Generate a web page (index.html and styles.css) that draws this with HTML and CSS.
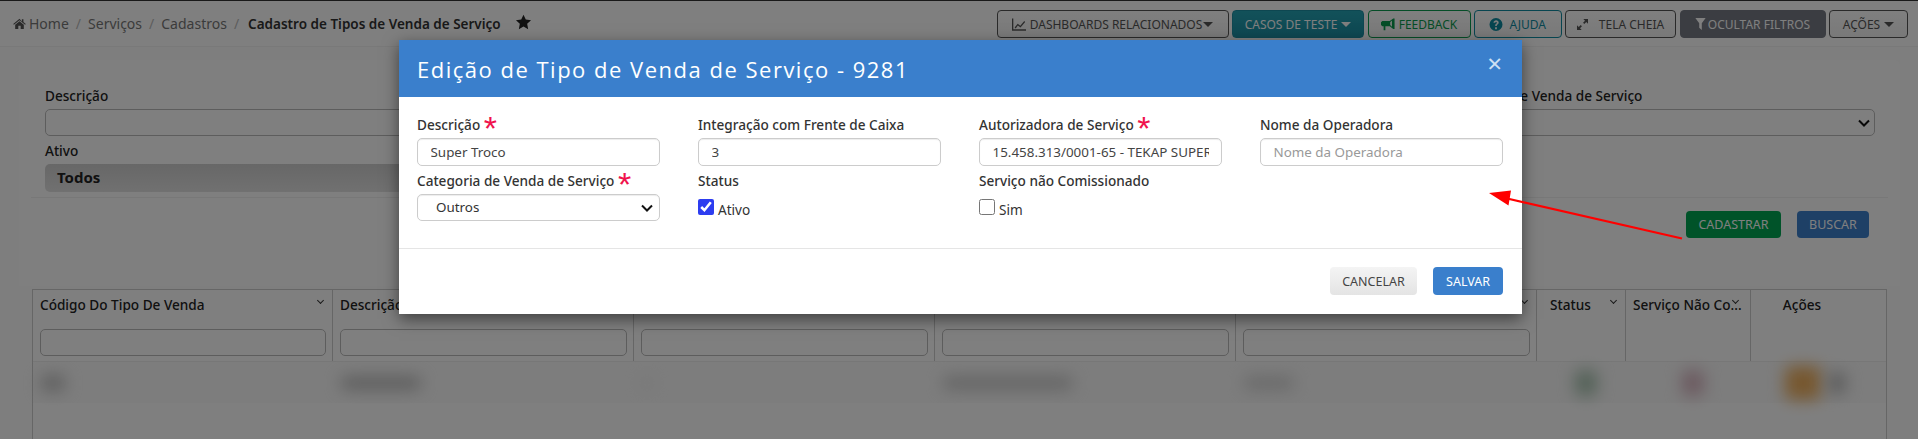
FILE: index.html
```html
<!DOCTYPE html>
<html lang="pt-BR">
<head>
<meta charset="utf-8">
<title>Cadastro de Tipos de Venda de Serviço</title>
<link rel="stylesheet" href="styles.css">
</head>
<body>
<div class="page">
  <header class="topbar">
    <nav class="crumbs">
      <svg class="ico-home" viewBox="0 0 16 14"><path d="M8 1 0 7.600l.9 1L8 2.800l7.100 5.800.9-1-3-2.500V1.500h-2v2.900zM2.500 8.700V14H6.500V10h3v4h4V8.700L8 4.200z"/></svg>
      <span class="crumb">Home</span><span class="sep">/</span>
      <span class="crumb">Serviços</span><span class="sep">/</span>
      <span class="crumb">Cadastros</span><span class="sep">/</span>
      <strong class="crumb-current">Cadastro de Tipos de Venda de Serviço</strong>
      <svg class="ico-star" viewBox="0 0 24 24"><path d="M12 1l3.400 7.300 7.900 1-5.800 5.500 1.500 7.900L12 18.800l-7 3.900 1.500-7.900L.7 9.300l7.900-1z"/></svg>
    </nav>
    <div class="actions">
      <button class="tb tb-dash"><svg class="ico" viewBox="0 0 16 14"><path d="M0 0h1.500v12.500H16V14H0z"/><path d="M3 10.500l3.500-4.500 3 2.500L14 3l1 1-5.300 6.500-3-2.500-2.500 3.500z"/></svg>DASHBOARDS RELACIONADOS<i class="caret"></i></button>
      <button class="tb tb-casos">CASOS DE TESTE <i class="caret caret-gap"></i></button>
      <button class="tb tb-feed"><svg class="ico" viewBox="0 0 16 14"><path d="M14 0h1.500v12H14l-4-3H5v4.500H3V9H1.500L0 7.500v-3L1.500 3H10zM12.500 2.500 10.500 4.300v3.400l2 1.800z"/></svg>FEEDBACK</button>
      <button class="tb tb-ajuda"><svg class="ico" viewBox="0 0 14 14"><path fill-rule="evenodd" d="M7 0a7 7 0 1 0 0 14A7 7 0 0 0 7 0zM6 10h2v2H6zM4.300 5C4.500 3.500 5.600 2.500 7.100 2.500c1.600 0 2.800 1 2.800 2.400 0 1.100-.6 1.700-1.300 2.200-.5.300-.7.600-.7 1.400H6.100c0-1.300.4-1.900 1.100-2.400.5-.4.800-.6.800-1.100 0-.5-.4-.8-.9-.8-.6 0-1 .4-1.100 1z"/></svg>AJUDA</button>
      <button class="tb tb-tela"><svg class="ico ico-exp" viewBox="0 0 14 14"><path d="M8 0h6v6l-2.200-2.200-2.500 2.500-1.600-1.600 2.500-2.500zM6 14H0V8l2.200 2.200 2.500-2.500 1.600 1.600-2.500 2.500z"/></svg>TELA CHEIA</button>
      <button class="tb tb-ocultar"><svg class="ico ico-fil" viewBox="0 0 12 14"><path d="M0 0h12L7.500 6v8l-3-2.500V6z"/></svg>OCULTAR FILTROS</button>
      <button class="tb tb-acoes">AÇÕES <i class="caret caret-gap"></i></button>
    </div>
  </header>

  <section class="panel">
    <div class="filters">
      <div class="f-col">
        <label class="f-label">Descrição</label>
        <div class="f-input"></div>
        <label class="f-label f-second">Ativo</label>
        <div class="f-select">Todos</div>
      </div>
      <div class="f-col f-right">
        <label class="f-label">Categoria de Venda de Serviço</label>
        <div class="f-input f-chev"><svg viewBox="0 0 12 8"><path d="M1 1.500 6 6.500l5-5" fill="none" stroke="#111" stroke-width="2"/></svg></div>
      </div>
    </div>
    <div class="panel-rule"></div>
    <div class="panel-btns">
      <button class="pb pb-green">CADASTRAR</button>
      <button class="pb pb-blue">BUSCAR</button>
    </div>
  </section>

  <section class="grid">
    <div class="gh">
      <div class="gc c1"><span class="gt">Código Do Tipo De Venda</span><i class="chev"></i><div class="gi"></div></div>
      <div class="gc c2"><span class="gt">Descrição</span><i class="chev"></i><div class="gi"></div></div>
      <div class="gc c2"><span class="gt">Integração</span><i class="chev"></i><div class="gi"></div></div>
      <div class="gc c2"><span class="gt">Autorizadora</span><i class="chev"></i><div class="gi"></div></div>
      <div class="gc c2"><span class="gt">Nome</span><i class="chev"></i><div class="gi"></div></div>
      <div class="gc c3"><span class="gt gt-status">Status</span><i class="chev"></i></div>
      <div class="gc c4"><span class="gt">Serviço Não Co...</span><i class="chev chev-tight"></i></div>
      <div class="gc c5"><span class="gt gt-center">Ações</span></div>
    </div>
    <div class="grow">
      <div class="cell c1"><i class="blob b-code"></i></div>
      <div class="cell c2"><i class="blob b-desc"></i></div>
      <div class="cell c2"><i class="blob b-int"></i></div>
      <div class="cell c2"><i class="blob b-aut"></i></div>
      <div class="cell c2"><i class="blob b-nom"></i></div>
      <div class="cell c3 cell-center"><i class="blob b-green"></i></div>
      <div class="cell c4 cell-center"><i class="blob b-pink"></i></div>
      <div class="cell c5 cell-acts"><i class="blob b-orange"></i><i class="blob b-grey"></i></div>
    </div>
  </section>
</div>

<div class="overlay"></div>

<div class="modal" role="dialog">
  <div class="m-head">
    <h2 class="m-title">Edição de Tipo de Venda de Serviço - 9281</h2>
    <span class="m-close">×</span>
  </div>
  <div class="m-body">
    <div class="m-field"><label class="m-label">Descrição <b class="req">*</b></label><input class="m-input" value="Super Troco"></div>
    <div class="m-field"><label class="m-label">Integração com Frente de Caixa</label><input class="m-input" value="3"></div>
    <div class="m-field"><label class="m-label">Autorizadora de Serviço <b class="req">*</b></label><input class="m-input" value="15.458.313/0001-65 - TEKAP SUPERMERCADOS"></div>
    <div class="m-field"><label class="m-label">Nome da Operadora</label><input class="m-input" placeholder="Nome da Operadora"></div>
    <div class="m-field"><label class="m-label">Categoria de Venda de Serviço <b class="req">*</b></label><select class="m-select"><option>Outros</option></select></div>
    <div class="m-field"><label class="m-label">Status</label><label class="m-check"><input type="checkbox" checked><span>Ativo</span></label></div>
    <div class="m-field"><label class="m-label">Serviço não Comissionado</label><label class="m-check"><input type="checkbox"><span>Sim</span></label></div>
  </div>
  <div class="m-foot">
    <button class="mb mb-cancel">CANCELAR</button>
    <button class="mb mb-save">SALVAR</button>
  </div>
</div>

<svg class="arrow" viewBox="0 0 1918 439"><line x1="1682" y1="238.500" x2="1505" y2="198" stroke="#f00" stroke-width="2.200"/><polygon points="1489,193 1511,190.500 1508.500,205.500" fill="#f00"/></svg>
</body>
</html>
```
FILE: styles.css
```css
* { box-sizing: border-box; }
html, body { margin: 0; height: 100%; }
body {
  width: 1918px;
  height: 439px;
  overflow: hidden;
  position: relative;
  background: #fcfcfc;
  font-family: "Noto Sans", "Open Sans", sans-serif;
  font-size: 13.600px;
  color: #333;
}
button { font-family: inherit; cursor: pointer; }

.page { display: flex; flex-direction: column; height: 439px; }

.topbar {
  height: 47px;
  flex: none;
  display: flex;
  justify-content: space-between;
  border-top: 1px solid #333;
  border-bottom: 1px solid #f2f2f2;
  background: #fff;
  padding: 9px 10px 0 13px;
}
.crumbs { display: flex; align-items: center; height: 27px; font-size: 14px; color: #777; }
.ico-home { width: 13px; height: 11px; fill: #555; margin-right: 3px; }
.sep { color: #bbb; margin: 0 7px; }
.crumb-current { font-weight: 600; color: #333; font-size: 13.500px; margin-left: 2px; }
.ico-star { width: 17px; height: 16px; fill: #222; margin-left: 14px; margin-top: -3px; }

.actions { display: flex; gap: 3.500px; }
.tb {
  height: 28px;
  display: flex;
  align-items: center;
  justify-content: center;
  padding: 0;
  font-size: 12px;
  border-radius: 4px;
  border: 1px solid #555;
  background: linear-gradient(#fff, #f2f2f2);
  color: #555;
}
.ico { width: 14px; height: 13px; fill: currentColor; margin-right: 4px; }
.ico-exp { width: 11px; height: 11px; margin-right: 11px; }
.ico-fil { width: 11px; height: 12px; margin-right: 2px; }
.caret {
  display: inline-block;
  width: 0;
  height: 0;
  border-left: 5px solid transparent;
  border-right: 5px solid transparent;
  border-top: 5px solid currentColor;
  margin-left: 1px;
}
.caret-gap { margin-left: 4px; }
.tb-dash { width: 232px; }
.tb-casos { width: 132px; background: linear-gradient(#25a3b4, #1c8ea3); border-color: #1c8ea3; color: #fff; }
.tb-feed { width: 103px; color: #0b9a4e; border-color: #0b9a4e; }
.tb-ajuda { width: 87.500px; color: #0f8aa0; border-color: #0f8aa0; }
.tb-ajuda .ico { margin-right: 6px; }
.tb-tela { width: 111px; }
.tb-ocultar { width: 146px; background: #777b85; border-color: #777b85; color: #fff; }
.tb-acoes { width: 79px; }

.panel {
  flex: none;
  height: 226px;
  margin: 13px 18px 0 19px;
  background: #fff;
  border-radius: 6px 6px 0 0;
  display: flex;
  flex-direction: column;
  padding: 0 12px;
}
.filters { display: flex; justify-content: space-between; padding: 26px 13px 0 14px; height: 137px; }
.f-col { width: 390px; display: flex; flex-direction: column; }
.f-right { width: 430px; }
.f-label { display: block; font-size: 13.600px; line-height: 20px; height: 23px; color: #222; font-weight: 500; }
.f-second { margin-top: 5px; }
.f-input {
  height: 27px;
  border: 1px solid #bbb;
  border-radius: 5px;
  background: #fff;
  display: flex;
  align-items: center;
  justify-content: flex-end;
  padding-right: 4px;
}
.f-chev svg { width: 12px; height: 8px; }
.f-select {
  height: 28px;
  border-radius: 5px;
  background: linear-gradient(#cfcfcf, #e2e2e2);
  font-weight: 700;
  font-size: 15px;
  line-height: 27px;
  padding-left: 12px;
  color: #222;
}
.panel-rule { height: 1px; background: #f0f0f0; }
.panel-btns { display: flex; justify-content: flex-end; gap: 16px; margin-top: 13px; padding-right: 19px; }
.pb { height: 27px; border: 0; border-radius: 4px; color: #fff; font-size: 12.500px; padding: 0; }
.pb-green { width: 95px; background: #00a653; }
.pb-blue { width: 72px; background: #3c80cc; }

.grid {
  flex: 1;
  margin: 3px 31px 0 32px;
  border: 1px solid #ccc;
  border-bottom: 0;
  background: #fff;
  display: flex;
  flex-direction: column;
}
.gh { display: flex; height: 72px; flex: none; border-bottom: 1px solid #eee; }
.grow { display: flex; height: 41px; background: #fafafa; }
.c1 { width: 300px; }
.c2 { width: 301px; }
.c3 { width: 89px; }
.c4 { width: 125px; }
.c5 { flex: 1; }
.gc { position: relative; border-right: 1px solid #ccc; padding: 5px 6px 0 7px; font-size: 13.600px; color: #222; }
.c5.gc { border-right: 0; }
.gt { display: block; height: 34px; line-height: 19px; white-space: nowrap; font-weight: 500; }
.gt-status { padding-left: 6px; }
.gt-center { text-align: center; padding-right: 34px; }
.gi { height: 27px; border: 1px solid #bbb; border-radius: 5px; background: #fff; }
.chev {
  position: absolute;
  top: 8px;
  right: 9px;
  width: 5px;
  height: 5px;
  border-right: 1px solid #333;
  border-bottom: 1px solid #333;
  transform: rotate(45deg);
}
.chev-tight { right: 12px; }

.cell { display: flex; align-items: center; padding-left: 8px; }
.cell-center { justify-content: center; }
.cell-acts { padding-left: 34px; gap: 8px; }
.blob { display: block; filter: blur(8px); border-radius: 6px; }
.b-code { width: 24px; height: 16px; background: #bdbdbd; }
.b-desc { width: 80px; height: 12px; background: #b4b4b4; }
.b-int { width: 10px; height: 10px; background: #ebebeb; }
.b-aut { width: 130px; height: 12px; background: #c4c4c4; }
.b-nom { width: 50px; height: 12px; background: #cfcfcf; }
.b-green { width: 22px; height: 26px; background: #a8c4b0; }
.b-pink { width: 22px; height: 26px; background: #d8b4c0; }
.b-orange { width: 36px; height: 34px; background: #eeb060; }
.b-grey { width: 16px; height: 22px; background: #b4b4b4; }

.overlay { position: absolute; inset: 0; background: rgba(0, 0, 0, .5); }

.modal {
  position: absolute;
  left: 399px;
  top: 40px;
  width: 1123px;
  height: 274px;
  background: #fff;
  box-shadow: 0 5px 15px rgba(0, 0, 0, .5);
  display: flex;
  flex-direction: column;
}
.m-head {
  height: 57px;
  flex: none;
  background: #3a7fcc;
  color: #fff;
  display: flex;
  justify-content: space-between;
  padding: 0 20px 0 18px;
}
.m-title { margin: 0; font-size: 22px; font-weight: 400; line-height: 58px; letter-spacing: 1.500px; font-family: "Open Sans", "Noto Sans", sans-serif; }
.m-close { font-size: 26px; line-height: 46px; color: #cfe0f3; font-weight: 400; }

.m-body {
  height: 152px;
  flex: none;
  border-bottom: 1px solid #e5e5e5;
  display: grid;
  grid-template-columns: repeat(4, 243px);
  column-gap: 38px;
  grid-auto-rows: 56px;
  padding: 17px 0 0 18px;
}
.m-label { display: block; height: 24px; line-height: 22px; font-size: 13.600px; color: #333; white-space: nowrap; font-weight: 500; }
.req { color: #f0134d; font-size: 34px; line-height: 14px; font-weight: 400; vertical-align: -10px; font-family: "Liberation Sans", sans-serif; }
.m-input {
  display: block;
  width: 243px;
  height: 28px;
  border: 1px solid #ccc;
  border-radius: 5px;
  padding: 0 12.500px;
  font: 13.400px "Noto Sans", sans-serif;
  color: #444;
  background: #fff;
  box-shadow: inset 0 1px 1px rgba(0, 0, 0, .075);
}
.m-input::placeholder { color: #999; }
.m-select {
  display: block;
  width: 243px;
  height: 27px;
  border: 1px solid #ccc;
  border-radius: 5px;
  padding: 0 0 2px 18px;
  font: 13.400px "Noto Sans", sans-serif;
  color: #333;
  appearance: none;
  background: #fff url("data:image/svg+xml,%3Csvg xmlns='http://www.w3.org/2000/svg' viewBox='0 0 12 8'%3E%3Cpath d='M1 1.500 6 6.500l5-5' fill='none' stroke='%23111' stroke-width='2'/%3E%3C/svg%3E") no-repeat right 6px center / 12px 8px;
  box-shadow: inset 0 1px 1px rgba(0, 0, 0, .075);
}
.m-check { display: flex; align-items: flex-start; gap: 4px; height: 28px; font-size: 13.600px; color: #333; padding-top: 5px; }
.m-check input { margin: 0; width: 16px; height: 16px; accent-color: #2d3df0; flex: none; }
.m-check span { line-height: 20px; margin-top: 1px; }

.m-foot { flex: 1; display: flex; justify-content: flex-end; gap: 16px; padding: 18px 19px 0 0; }
.mb { height: 28px; border: 0; border-radius: 4px; font-size: 12.500px; padding: 0; }
.mb-cancel { width: 87px; background: linear-gradient(#f4f4f4, #e4e4e4); color: #444; }
.mb-save { width: 70px; background: #3a7fcc; color: #fff; }

.arrow { position: absolute; left: 0; top: 0; width: 1918px; height: 439px; pointer-events: none; }
```
